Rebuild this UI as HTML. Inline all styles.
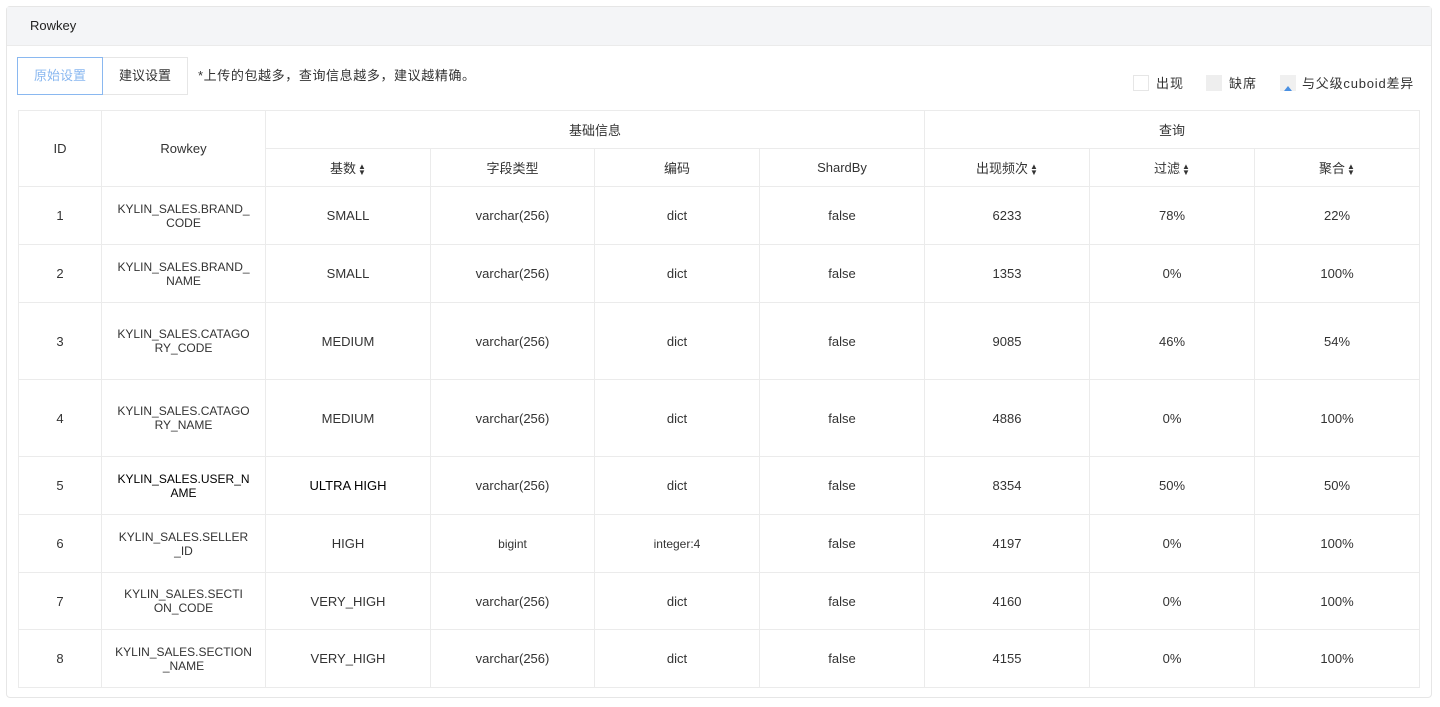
<!DOCTYPE html>
<html><head><meta charset="utf-8"><style>
body{margin:0;background:#fff;font-family:"Liberation Sans","Noto Sans CJK SC",sans-serif;color:#333;}
.card{position:absolute;left:6px;top:6px;width:1426px;height:692px;border:1px solid #e6e6e6;border-radius:4px;box-sizing:border-box;}
.hd{height:38px;background:#f4f5f7;line-height:38px;padding-left:23px;font-size:13px;color:#222;border-bottom:1px solid #ebebeb}
.btn{position:absolute;top:50px;height:38px;line-height:36px;box-sizing:border-box;font-size:13px;text-align:center;border:1px solid #e6e6e6;}
.tip{position:absolute;left:191px;top:50px;line-height:38px;font-size:13px;color:#333;letter-spacing:0.6px}
.leg{position:absolute;top:68px;font-size:13px;line-height:17px;color:#333}
.sq{position:absolute;top:68px;width:16px;height:16px;box-sizing:border-box}
table{position:absolute;left:11px;top:103px;border-collapse:collapse;table-layout:fixed;font-size:13px;}
td{border:1px solid #ebebeb;text-align:center;padding:0;color:#333}
.s{font-size:12px}
.ar{display:inline-block;font-size:8px;line-height:6px;vertical-align:middle;margin-left:2px;color:#333}
</style></head><body>
<div class="card">
<div class="hd">Rowkey</div>
<div class="btn" style="left:10px;width:86px;border-color:#8ab8f0;color:#8ab8f0">原始设置</div>
<div class="btn" style="left:96px;width:85px;border-left:none">建议设置</div>
<div class="tip">*上传的包越多，查询信息越多，建议越精确。</div>
<div class="sq" style="left:1126px;border:1px solid #e6e6e6"></div><div class="leg" style="left:1149px;letter-spacing:1px">出现</div>
<div class="sq" style="left:1199px;background:#eee"></div><div class="leg" style="left:1222px;letter-spacing:1px">缺席</div>
<div class="sq" style="left:1273px;background:#f0f0f0"><div style="position:absolute;left:4px;bottom:0;width:0;height:0;border-left:4px solid transparent;border-right:4px solid transparent;border-bottom:5px solid #4a90e2"></div></div><div class="leg" style="left:1295px;letter-spacing:0.8px">与父级cuboid差异</div>
<table>
<colgroup><col style="width:83px"><col style="width:164px"><col style="width:165px"><col style="width:164px"><col style="width:165px"><col style="width:165px"><col style="width:165px"><col style="width:165px"><col style="width:165px"></colgroup>
<tr style="height:38px"><td rowspan="2">ID</td><td rowspan="2">Rowkey</td><td colspan="4">基础信息</td><td colspan="3">查询</td></tr>
<tr style="height:38px"><td>基数<span class="ar">▲<br>▼</span></td><td>字段类型</td><td>编码</td><td>ShardBy</td><td>出现频次<span class="ar">▲<br>▼</span></td><td>过滤<span class="ar">▲<br>▼</span></td><td>聚合<span class="ar">▲<br>▼</span></td></tr>
<tr style="height:58px"><td>1</td><td class="s">KYLIN_SALES.BRAND_<br>CODE</td><td>SMALL</td><td>varchar(256)</td><td>dict</td><td>false</td><td>6233</td><td>78%</td><td>22%</td></tr>
<tr style="height:58px"><td>2</td><td class="s">KYLIN_SALES.BRAND_<br>NAME</td><td>SMALL</td><td>varchar(256)</td><td>dict</td><td>false</td><td>1353</td><td>0%</td><td>100%</td></tr>
<tr style="height:77px"><td>3</td><td class="s">KYLIN_SALES.CATAGO<br>RY_CODE</td><td>MEDIUM</td><td>varchar(256)</td><td>dict</td><td>false</td><td>9085</td><td>46%</td><td>54%</td></tr>
<tr style="height:77px"><td>4</td><td class="s">KYLIN_SALES.CATAGO<br>RY_NAME</td><td>MEDIUM</td><td>varchar(256)</td><td>dict</td><td>false</td><td>4886</td><td>0%</td><td>100%</td></tr>
<tr style="height:58px"><td>5</td><td class="s" style="color:#000">KYLIN_SALES.USER_N<br>AME</td><td style="color:#000">ULTRA HIGH</td><td>varchar(256)</td><td>dict</td><td>false</td><td>8354</td><td>50%</td><td>50%</td></tr>
<tr style="height:58px"><td>6</td><td class="s">KYLIN_SALES.SELLER<br>_ID</td><td>HIGH</td><td class="s">bigint</td><td class="s">integer:4</td><td>false</td><td>4197</td><td>0%</td><td>100%</td></tr>
<tr style="height:57px"><td>7</td><td class="s">KYLIN_SALES.SECTI<br>ON_CODE</td><td>VERY_HIGH</td><td>varchar(256)</td><td>dict</td><td>false</td><td>4160</td><td>0%</td><td>100%</td></tr>
<tr style="height:58px"><td>8</td><td class="s">KYLIN_SALES.SECTION<br>_NAME</td><td>VERY_HIGH</td><td>varchar(256)</td><td>dict</td><td>false</td><td>4155</td><td>0%</td><td>100%</td></tr>
</table>
</div>
</body></html>
